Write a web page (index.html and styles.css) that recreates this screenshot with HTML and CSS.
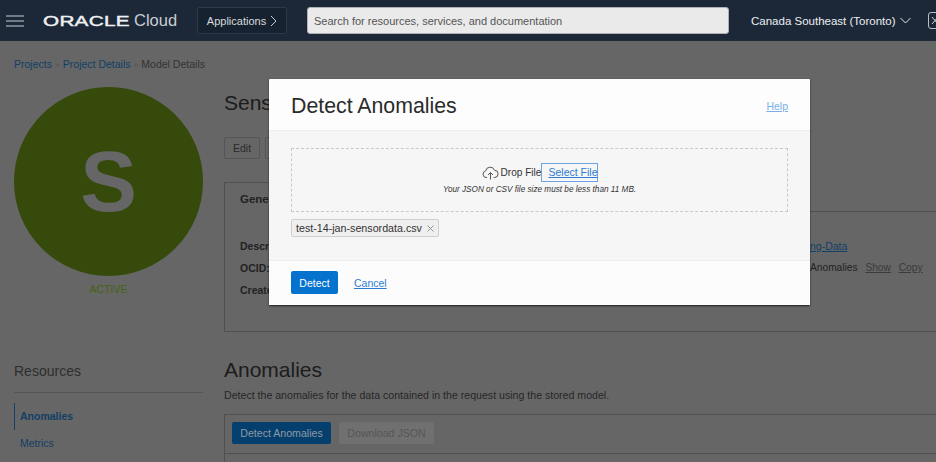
FILE: index.html
```html
<!DOCTYPE html>
<html lang="en">
<head>
<meta charset="utf-8">
<title>Detect Anomalies</title>
<link rel="stylesheet" href="styles.css">
</head>
<body>
<header class="topbar">
  <svg class="menu" width="18" height="12" viewBox="0 0 18 12"><path d="M0 1h18M0 6h18M0 11h18" stroke="#8f969e" stroke-width="1.300"/></svg>
  <div class="brand"><span class="oracle">ORACLE</span><span class="cloud">Cloud</span></div>
  <button class="apps">Applications
    <svg width="7" height="12" viewBox="0 0 7 12"><path d="M1 1l5 5-5 5" fill="none" stroke="#c8ccd0" stroke-width="1"/></svg>
  </button>
  <div class="search">Search for resources, services, and documentation</div>
  <div class="region">Canada Southeast (Toronto)
    <svg width="11" height="7" viewBox="0 0 11 7"><path d="M.5 1l5 5 5-5" fill="none" stroke="#e8eaec" stroke-width="1"/></svg>
  </div>
  <div class="cornerbtn"><svg width="8" height="9" viewBox="0 0 8 9"><path d="M1 1l6 7M7 1L1 8" fill="none" stroke="#cfd3d7" stroke-width="1"/></svg></div>
</header>

<main class="page">
  <aside class="side">
    <nav class="crumbs"><a>Projects</a> <i>»</i> <a>Project Details</a> <i>»</i> Model Details</nav>
    <div class="avatar">S</div>
    <div class="state">ACTIVE</div>
    <h2 class="res">Resources</h2>
    <ul class="resnav">
      <li class="on">Anomalies</li>
      <li>Metrics</li>
    </ul>
  </aside>
  <section class="detail">
    <h1 class="title">Sensor</h1>
    <div class="actions"><span class="btn">Edit</span><span class="btn">Move</span></div>
    <div class="panel">
      <h3>General</h3>
      <div class="rows">
        <div class="row"><b>Description:</b><span class="end"><a>ng-Data</a></span></div>
        <div class="row"><b>OCID:</b><span class="end">Anomalies <u>Show</u> <u>Copy</u></span></div>
        <div class="row"><b>Created:</b></div>
      </div>
    </div>
    <h2 class="anom">Anomalies</h2>
    <p class="desc">Detect the anomalies for the data contained in the request using the stored model.</p>
    <div class="tablebox">
      <div class="toolbar"><span class="primary">Detect Anomalies</span><span class="disabled">Download JSON</span></div>
    </div>
  </section>
</main>

<div class="dialog">
  <div class="dhead"><h2>Detect Anomalies</h2><a class="help">Help</a></div>
  <div class="dbody">
    <div class="drop">
      <div class="dropline">
        <svg width="17" height="14" viewBox="0 0 17 14"><path d="M5 11.500H4A3.300 3.300 0 0 1 3.600 5 4.600 4.600 0 0 1 12.500 4.300 3.600 3.600 0 0 1 12.500 11.500H11.500M8.500 13.500V7M6 9l2.500-2.500L11 9" fill="none" stroke="#555" stroke-width="1"/></svg>
        <span class="droplabel">Drop File</span><a class="select">Select File</a>
      </div>
      <p>Your JSON or CSV file size must be less than 11 MB.</p>
    </div>
    <div class="chip">test-14-jan-sensordata.csv
      <svg width="7" height="7" viewBox="0 0 7 7"><path d="M.5.500l6 6M6.500.500l-6 6" fill="none" stroke="#8a8a8a" stroke-width=".9"/></svg>
    </div>
  </div>
  <div class="dfoot"><button class="detect">Detect</button><a class="cancel">Cancel</a></div>
</div>
</body>
</html>
```
FILE: styles.css
```css
* { box-sizing: border-box; }
html, body { margin: 0; height: 100%; }
body { width: 936px; height: 462px; overflow: hidden; background: #666; font-family: "Liberation Sans", Arial, sans-serif; color: #1c1c1c; position: relative; }
a { color: #123f66; }

.topbar { height: 41px; background: #1c2838; display: flex; align-items: center; padding-left: 6px; position: relative; }
.menu { margin-right: 19px; flex: none; }
.brand { display: flex; align-items: baseline; width: 128px; flex: none; color: #eef0f2; }
.oracle { flex: none; font-size: 15px; font-weight: 400; -webkit-text-stroke: .45px #eef0f2; letter-spacing: .2px; transform: scaleX(1.38); transform-origin: left; width: 91px; }
.cloud { flex: none; font-size: 16.500px; color: #c9cdd2; }
.apps { width: 90px; height: 27px; margin-left: 26px; flex: none; background: #172230; border: 1px solid #2c3949; border-radius: 2px; color: #d8dbde; font: 11px "Liberation Sans", Arial, sans-serif; display: flex; align-items: center; justify-content: center; gap: 4px; padding: 0; }
.search { width: 422px; height: 27px; margin-left: 20px; flex: none; background: #eaeaea; border: 1px solid #aeb2b7; border-radius: 3px; color: #555; font-size: 11px; display: flex; align-items: center; padding-left: 6px; }
.region { margin-left: 22px; color: #eceef0; font-size: 11.500px; display: flex; align-items: center; gap: 5px; white-space: nowrap; }
.cornerbtn { position: absolute; left: 928px; top: 12px; width: 16px; height: 17px; border: 1px solid #b9bec4; border-radius: 3px; padding: 3px 0 0 2px; line-height: 0; }

.page { display: flex; padding: 0 0 0 14px; }
.side { width: 189px; flex: none; }
.crumbs { margin-top: 17px; font-size: 10.500px; line-height: 13px; color: #333; white-space: nowrap; }
.crumbs i { font-style: normal; color: #555; font-size: 9px; }
.avatar { width: 189px; height: 189px; margin-top: 15px; border-radius: 50%; background: #354a0b; color: #666; font-size: 85px; font-weight: 700; display: flex; align-items: center; justify-content: center; }
.state { text-align: center; margin-top: 7px; font-size: 10.500px; line-height: 13px; color: #46620e; }
.res { margin: 67px 0 0; font-size: 14px; font-weight: 400; line-height: 17px; color: #2e2e2e; padding-bottom: 12px; border-bottom: 1px solid #555; }
.resnav { list-style: none; margin: 10px 0 0; padding: 0; font-size: 10.500px; color: #123f66; }
.resnav li { height: 27px; line-height: 27px; padding-left: 5px; border-left: 1px solid transparent; }
.resnav .on { font-weight: 700; border-left-color: #123f66; }

.detail { margin-left: 21px; width: 712px; flex: none; }
.title { margin: 49px 0 0; font-size: 21px; font-weight: 400; line-height: 26px; color: #1c1c1c; }
.actions { display: flex; gap: 5px; margin-top: 21px; }
.btn { height: 22px; padding: 0 8px; border: 1px solid #555; border-radius: 2px; font-size: 10.500px; line-height: 20px; color: #2a2a2a; }
.panel { position: relative; height: 150px; margin-top: 23px; border-left: 1px solid #505050; border-bottom: 1px solid #505050; padding: 10px 15px; }
.panel::before { content: ""; position: absolute; left: -1px; top: 0; width: 60px; height: 1px; background: #505050; }
.panel::after { content: ""; position: absolute; right: 0; top: 29px; width: 140px; height: 1px; background: #505050; }
.panel h3 { margin: 0; font-size: 11.500px; line-height: 15px; color: #222; }
.rows { margin-top: 32px; font-size: 10.500px; color: #222; }
.row { position: relative; height: 22px; line-height: 14px; }
.end { position: absolute; left: 570px; top: 0; font-size: 10.200px; white-space: nowrap; }
.end a { text-decoration: underline; font-size: 10.500px; }
.end u { color: #3a3a3a; margin-left: 5px; }
.anom { margin: 25px 0 0; font-size: 21px; font-weight: 400; line-height: 26px; color: #1c1c1c; }
.desc { margin: 6px 0 0; font-size: 10.600px; line-height: 13px; color: #262626; white-space: nowrap; }
.tablebox { margin-top: 12px; border: 1px solid #505050; border-right: 0; height: 60px; }
.toolbar { height: 39px; border-bottom: 1px solid #505050; padding: 7px 7px; display: flex; gap: 8px; }
.primary, .disabled { height: 22px; border-radius: 2px; font-size: 10.600px; line-height: 22px; text-align: center; }
.primary { width: 99px; background: #053f6e; color: #8f9aa4; }
.disabled { width: 95px; background: #707070; color: #565656; }

.dialog { position: absolute; left: 269px; top: 79px; width: 541px; height: 226px; background: #fdfdfd; border-radius: 1px; box-shadow: 0 1px 2px rgba(0,0,0,.7); }
.dhead { height: 52px; display: flex; justify-content: space-between; align-items: center; padding: 4px 22px 0 22px; border-bottom: 1px solid #ededed; }
.dhead h2 { margin: 0; font-size: 21.300px; font-weight: 400; color: #2b2b2b; }
.help { font-size: 10.500px; color: #79b0e6; text-decoration: underline; margin-top: -2px; }
.dbody { height: 130px; background: #f6f6f6; border-bottom: 1px solid #ededed; padding: 17px 22px 0; }
.drop { height: 64px; border: 1px dashed #c9c9c9; padding-top: 14px; text-align: center; }
.dropline { display: flex; justify-content: center; align-items: center; height: 19px; font-size: 10.500px; color: #333; padding-left: 1px; }
.droplabel { font-size: 10.100px; }
.dropline svg { margin-right: 2px; }
.select { height: 19px; line-height: 17px; padding: 0 0 0 6px; border: 1.500px solid #6da3e0; color: #2c7cd0; text-decoration: underline; }
.drop p { margin: 2px 0 0; font-size: 8.200px; line-height: 11px; font-style: italic; color: #333; }
.chip { display: inline-flex; align-items: center; gap: 5px; height: 18px; margin-top: 7px; padding: 0 4px 0 4px; background: #efefef; border: 1px solid #cfcfcf; border-radius: 2px; font-size: 10.700px; color: #333; white-space: nowrap; }
.dfoot { height: 44px; display: flex; align-items: center; padding-left: 22px; padding-bottom: 1px; background: #fcfcfc; }
.detect { width: 47px; height: 23px; padding: 0; border: 0; border-radius: 2px; background: #0572ce; color: #fff; font: 10.500px "Liberation Sans", Arial, sans-serif; }
.cancel { margin-left: 16px; font-size: 10.500px; color: #2c7cd0; text-decoration: underline; }
```
